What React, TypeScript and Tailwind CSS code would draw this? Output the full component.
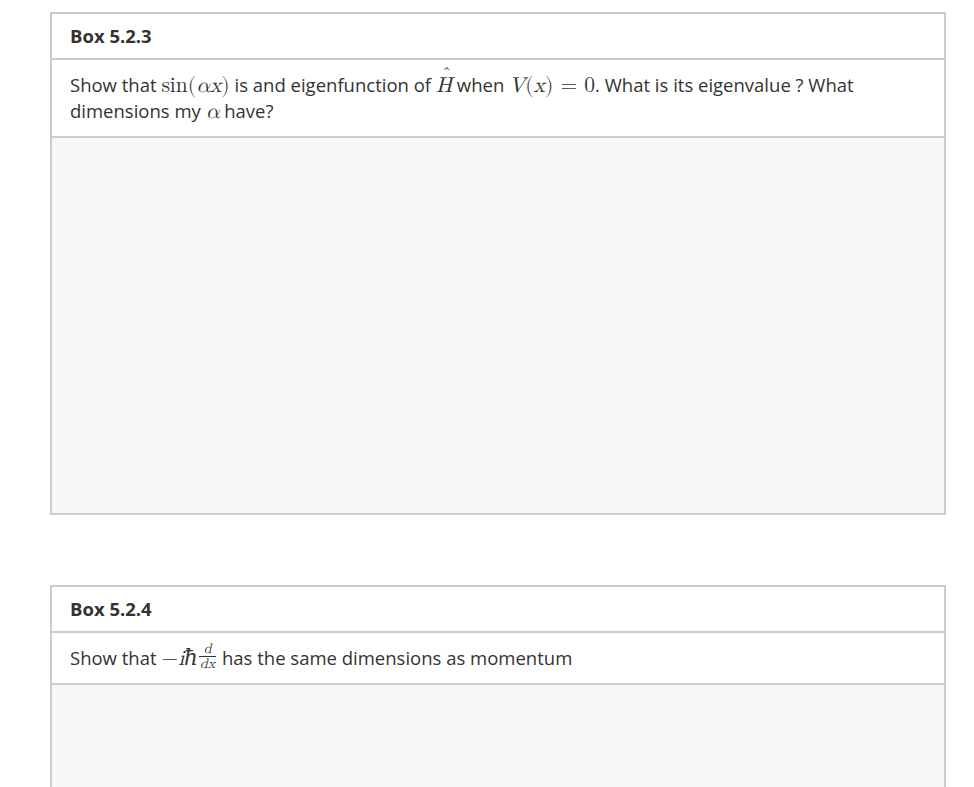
import React from "react";

const M = ({ children }: { children: React.ReactNode }) => (
  <span className="font-['Latin_Modern_Math','DejaVu_Serif','Liberation_Serif',serif] text-[21.5px] leading-none whitespace-nowrap">
    {children}
  </span>
);

const I = ({ children }: { children: React.ReactNode }) => <i className="italic">{children}</i>;

const Box = ({
  title,
  children,
  answerHeight,
}: {
  title: string;
  children: React.ReactNode;
  answerHeight: string;
}) => (
  <div className="border-2 border-[#cccccc] bg-white">
    <div className="px-[18px] py-[9px] font-bold text-[#333] border-b-2 border-[#cccccc]">{title}</div>
    <div className="px-[18px] py-3 text-[#333] border-b-2 border-[#cccccc]">{children}</div>
    <div className={`bg-[#f7f7f7] ${answerHeight}`} />
  </div>
);

export default function App() {
  return (
    <div className="min-h-screen bg-white font-['Open_Sans',sans-serif] text-[18.5px] leading-[26px]">
      <div className="ml-[50px] mr-[28px] pt-[12px] flex flex-col gap-[70px]">
        <Box title="Box 5.2.3" answerHeight="h-[375px]">
          Show that{" "}
          <M>
            sin(<I>αx</I>)
          </M>{" "}
          is and eigenfunction of{" "}
          <M>
            <span className="relative inline-block">
              <I>H</I>
              <span className="absolute left-[6px] -top-[10px] text-[19px] not-italic">ˆ</span>
            </span>
          </M>{" "}
          when{" "}
          <M>
            <I>V</I>(<I>x</I>) = 0
          </M>
          . What is its eigenvalue ? What dimensions my <M><I>α</I></M> have?
        </Box>
        <Box title="Box 5.2.4" answerHeight="h-[200px]">
          Show that{" "}
          <M>
            −<I>iħ</I>
            <span className="inline-flex flex-col items-center align-middle text-[14px] leading-[13px] mx-[1px] -mt-[6px]">
              <I>d</I>
              <span className="border-t border-[#333] px-[1px] pt-[1px]">
                <I>dx</I>
              </span>
            </span>
          </M>{" "}
          has the same dimensions as momentum
        </Box>
      </div>
    </div>
  );
}
